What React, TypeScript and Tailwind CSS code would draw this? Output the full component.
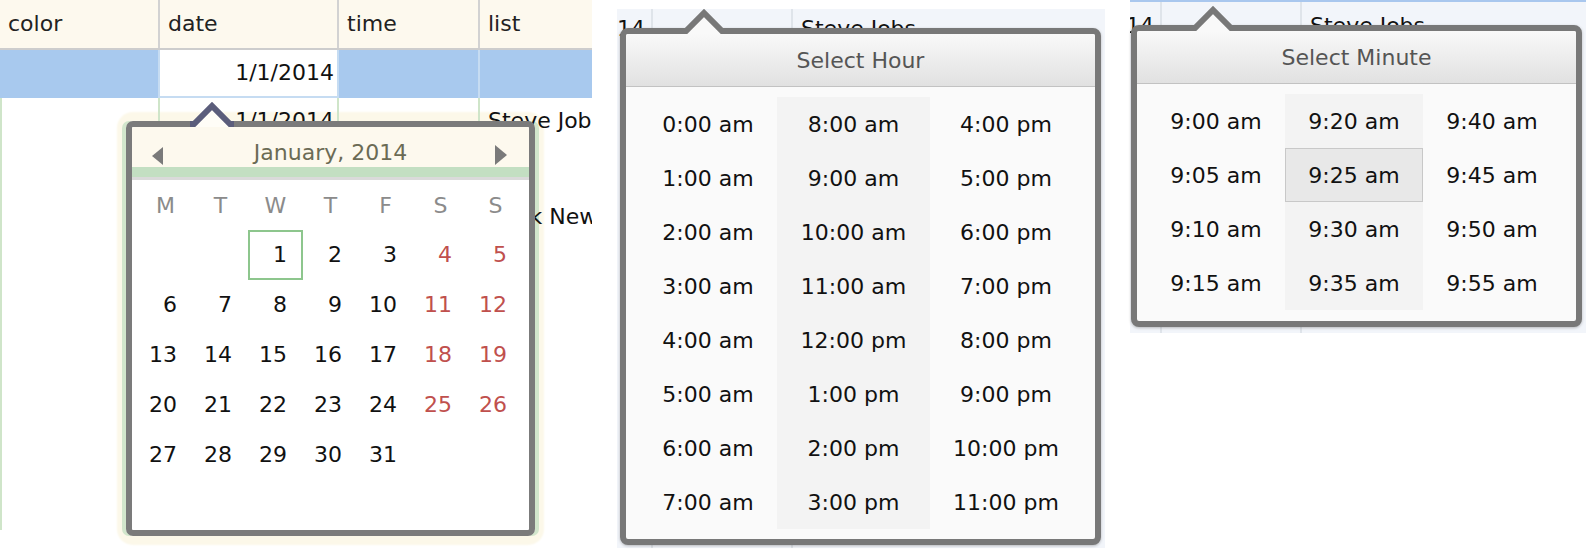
import React from "react";

type CaretProps = { className: string; stroke: string; fill: string };

function Caret({ className, stroke, fill }: CaretProps) {
  return (
    <svg className={`absolute top-[-26px] ${className}`} width="44" height="27" viewBox="0 0 44 27">
      <polygon points="4,23 22,5 40,23 40,26 4,26" fill={fill} />
      <polyline points="0,23 4,23 22,5 40,23 44,23" fill="none" stroke={stroke} strokeWidth="6" strokeLinejoin="miter" />
    </svg>
  );
}

const days: (number | null)[] = [null, null, ...Array.from({ length: 31 }, (_, i) => i + 1)];
while (days.length < 42) days.push(null);

const gridRows = [
  { date: "1/1/2014", list: "Steve Jobs" },
  { date: "", list: "" },
  { date: "1/1/2014", list: "Mark Newman" },
  { date: "", list: "" },
  { date: "1/1/2014", list: "" },
  { date: "", list: "" },
  { date: "1/1/2014", list: "" },
  { date: "", list: "" },
  { date: "", list: "" },
];

function Calendar() {
  return (
    <div className="absolute left-[126px] top-[121px] z-20 h-[415px] w-[409px] rounded-[7px] border-[6px] border-[#7b7b7b] bg-white">
      <Caret className="left-[58px]" stroke="#5b5d7b" fill="#fffdf7" />
      <div className="relative flex h-[40px] justify-center rounded-t-[2px] bg-[#fdf9ee] pt-[12px] leading-[28px] text-[#6b6b55]">
        <svg className="absolute left-[20px] top-[20px]" width="11" height="18" viewBox="0 0 11 18">
          <polygon points="11,0 0,9 11,18" fill="#7a7a7a" />
        </svg>
        <span>January, 2014</span>
        <svg className="absolute right-[22px] top-[18px]" width="12" height="20" viewBox="0 0 12 20">
          <polygon points="0,0 12,10 0,20" fill="#7a7a7a" />
        </svg>
      </div>
      <div className="h-[10px] bg-[#c3dfc2]" />
      <div className="h-[3px] bg-[#dadada]" />
      <div className="grid h-[50px] grid-cols-7 items-center px-[6px] text-center text-[#8b8b8b]">
        {["M", "T", "W", "T", "F", "S", "S"].map((d, i) => (
          <span key={i}>{d}</span>
        ))}
      </div>
      <div className="grid grid-cols-7 px-[6px]">
        {days.map((d, i) => {
          const weekend = i % 7 >= 5;
          const today = d === 1;
          return (
            <div
              key={i}
              className={
                today
                  ? "h-[50px] border-2 border-[#8dc68d] pr-[14px] text-right leading-[46px] text-[#111]"
                  : weekend
                  ? "h-[50px] pr-[16px] text-right leading-[50px] text-[#c0504d]"
                  : "h-[50px] pr-[16px] text-right leading-[50px] text-[#111]"
              }
            >
              {d ?? ""}
            </div>
          );
        })}
      </div>
    </div>
  );
}

function DateGrid() {
  return (
    <div className="relative h-[545px] w-[592px] shrink-0">
      {/* soft glow that sits behind the grid text */}
      <div className="absolute left-[126px] top-[121px] z-0 h-[415px] w-[409px] rounded-[7px] shadow-[-4px_0_0_0_#d2e6cc,4px_0_0_0_#d2e6cc,0_0_2px_9px_#fcf8e9]" />
      <div className="relative z-10 h-full w-full overflow-hidden">
        <div className="flex h-[50px] border-b-2 border-[#cdcdcd] bg-[#fdf9ee] leading-[48px] text-[#222]">
          <div className="w-[160px] shrink-0 border-r-2 border-[#d2d2d2] pl-[8px]">color</div>
          <div className="w-[179px] shrink-0 border-r-2 border-[#d2d2d2] pl-[8px]">date</div>
          <div className="w-[141px] shrink-0 border-r-2 border-[#d2d2d2] pl-[8px]">time</div>
          <div className="w-[112px] shrink-0 pl-[8px]">list</div>
        </div>
        <div className="flex h-[48px] bg-[#a8c9ee] leading-[46px] text-[#111]">
          <div className="w-[160px] shrink-0 border-r-2 border-[#c6dcf2]" />
          <div className="w-[179px] shrink-0 border-b-2 border-r-2 border-[#c6dcf2] bg-white pr-[3px] text-right">1/1/2014</div>
          <div className="w-[141px] shrink-0 border-r-2 border-[#c6dcf2]" />
          <div className="w-[112px] shrink-0" />
        </div>
        {gridRows.map((r, i) => (
          <div key={i} className="flex h-[48px] leading-[46px] text-[#111]">
            <div className="w-[160px] shrink-0 border-x-2 border-[#cfe5c9]" />
            <div className="w-[179px] shrink-0 border-r-2 border-[#cfe5c9] pr-[3px] text-right">{r.date}</div>
            <div className="w-[141px] shrink-0 border-r-2 border-[#cfe5c9]" />
            <div className="w-[112px] shrink-0 overflow-hidden whitespace-nowrap pl-[8px]">{r.list}</div>
          </div>
        ))}
      </div>
      <Calendar />
    </div>
  );
}

const hourCols = [
  ["0:00 am", "1:00 am", "2:00 am", "3:00 am", "4:00 am", "5:00 am", "6:00 am", "7:00 am"],
  ["8:00 am", "9:00 am", "10:00 am", "11:00 am", "12:00 pm", "1:00 pm", "2:00 pm", "3:00 pm"],
  ["4:00 pm", "5:00 pm", "6:00 pm", "7:00 pm", "8:00 pm", "9:00 pm", "10:00 pm", "11:00 pm"],
];

const minuteCols = [
  ["9:00 am", "9:05 am", "9:10 am", "9:15 am"],
  ["9:20 am", "9:25 am", "9:30 am", "9:35 am"],
  ["9:40 am", "9:45 am", "9:50 am", "9:55 am"],
];

function PopupHeader({ title }: { title: string }) {
  return (
    <div className="flex h-[53px] items-center justify-center rounded-t-[2px] border-b border-[#c2c2c2] bg-linear-to-b from-[#f9f9f9] to-[#e1e1e1] text-[#555]">
      {title}
    </div>
  );
}

function BackGrid({ first, second }: { first: string; second: string }) {
  return (
    <div className="flex h-full text-[#111]">
      <div className={`flex shrink-0 justify-end overflow-hidden border-r-2 border-[#dfe4ea] ${first}`}>
        <span className="shrink-0 whitespace-nowrap pr-[6px]">1/1/2014</span>
      </div>
      <div className={`shrink-0 border-r-2 border-[#dfe4ea] ${second}`} />
      <div className="flex-1 whitespace-nowrap pl-[8px]">Steve Jobs</div>
    </div>
  );
}

function HourPicker() {
  return (
    <div className="relative ml-[25px] mt-[9px] h-[539px] w-[488px] shrink-0 bg-[#f2f5fa] leading-[40px]">
      <BackGrid first="w-[36px]" second="w-[140px]" />
      <div className="absolute left-[3px] top-[19px] h-[517px] w-[481px] rounded-[8px] border-[6px] border-[#787878] bg-[#fafafa] leading-normal shadow-[0_1px_3px_rgba(0,0,0,0.25)]">
        <Caret className="left-[56px]" stroke="#787878" fill="#f9f9f9" />
        <PopupHeader title="Select Hour" />
        <div className="flex pl-[13px] pt-[10px] text-[#111]">
          {hourCols.map((col, ci) => (
            <div
              key={ci}
              className={ci === 0 ? "w-[138px]" : ci === 1 ? "w-[153px] bg-[#f3f3f3]" : "w-[152px]"}
            >
              {col.map((t) => (
                <div key={t} className="flex h-[54px] items-center justify-center whitespace-nowrap">
                  {t}
                </div>
              ))}
            </div>
          ))}
        </div>
      </div>
    </div>
  );
}

function MinutePicker() {
  return (
    <div className="relative ml-[25px] h-[333px] w-[456px] shrink-0 border-t-2 border-[#a9c7ee] bg-[#f2f5fa] leading-[48px]">
      <BackGrid first="w-[32px]" second="w-[140px]" />
      <div className="absolute left-[1px] top-[23px] h-[302px] w-[451px] rounded-[8px] border-[6px] border-[#787878] bg-[#fafafa] leading-normal shadow-[0_1px_3px_rgba(0,0,0,0.25)]">
        <Caret className="left-[54px]" stroke="#787878" fill="#f9f9f9" />
        <PopupHeader title="Select Minute" />
        <div className="flex pl-[10px] pt-[10px] text-[#111]">
          {minuteCols.map((col, ci) => (
            <div key={ci} className={ci === 1 ? "w-[138px] bg-[#f3f3f3]" : "w-[138px]"}>
              {col.map((t) => (
                <div
                  key={t}
                  className={
                    t === "9:25 am"
                      ? "flex h-[54px] items-center justify-center whitespace-nowrap border border-[#c8c8c8] bg-[#e8e8e8]"
                      : "flex h-[54px] items-center justify-center whitespace-nowrap"
                  }
                >
                  {t}
                </div>
              ))}
            </div>
          ))}
        </div>
      </div>
    </div>
  );
}

export default function App() {
  return (
    <div className="flex h-[550px] w-[1586px] items-start overflow-hidden bg-white font-['DejaVu_Sans',sans-serif] text-[22px]">
      <DateGrid />
      <HourPicker />
      <MinutePicker />
    </div>
  );
}
